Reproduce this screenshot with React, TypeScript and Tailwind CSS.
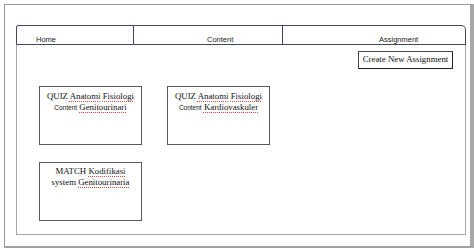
import React from "react";

const serif = { fontFamily: '"Liberation Serif", "Times New Roman", serif' };
const sans = { fontFamily: '"Liberation Sans", Arial, sans-serif' };

function Sp({ children }: { children: React.ReactNode }) {
  return (
    <span className="underline decoration-dotted decoration-[#e04848] decoration-[1px] underline-offset-[2px]">
      {children}
    </span>
  );
}

function Card({ children, pt = "pt-[3px]" }: { children: React.ReactNode; pt?: string }) {
  return (
    <div className={`w-[103px] h-[59px] border border-[#5a5a5a] bg-white text-center text-[8.8px] leading-[11px] text-[#111] ${pt}`} style={serif}>
      {children}
    </div>
  );
}

export default function App() {
  return (
    <div className="w-[474px] h-[251px] bg-white pl-[4px] pt-[4px] overflow-hidden">
      <div className="w-[470px] h-[244px] border-l border-t border-[#9a9a9a] border-r-[4px] border-r-[#a8a8a8] border-b-[2px] border-b-[#a0a0a0] pl-[11px] pt-[20px] pr-[4px]">
        {/* Tabs */}
        <div className="flex h-[20px] text-[7.5px] text-[#222]" style={sans}>
          <div className="w-[118px] border-t border-l border-r border-b border-[#3f4862] rounded-tl-[2px] pl-[19px] flex items-end leading-[9px]">
            Home
          </div>
          <div className="w-[149px] border-t border-r border-b border-[#3f4862] pl-[73px] flex items-end leading-[9px]">
            Content
          </div>
          <div className="flex-1 border-t border-r border-b border-[#3f4862] rounded-tr-[5px] pl-[96px] flex items-end leading-[9px]">
            Assignment
          </div>
        </div>
        {/* Panel */}
        <div className="h-[190px] border-l border-r border-b border-[#a5a5ad] flex flex-col">
          <div className="self-end mr-[12px] mt-[6px] w-[95px] h-[18px] border border-[#444] border-r-[#222] border-b-[#222] flex items-center justify-center text-[8.8px] text-[#111]" style={serif}>
            Create New Assignment
          </div>
          <div className="ml-[22px] mt-[17px] grid grid-cols-[103px_103px] gap-x-[25px] gap-y-[17px]">
            <Card pt="pt-[4px]">
              <div>QUIZ <Sp>Anatomi</Sp> <Sp>Fisiologi</Sp></div>
              <div>
                <span className="text-[6.5px]" style={sans}>Content</span> <Sp>Genitourinari</Sp>
              </div>
            </Card>
            <Card pt="pt-[4px]">
              <div>QUIZ <Sp>Anatomi</Sp> <Sp>Fisiologi</Sp></div>
              <div>
                <span className="text-[6.5px]" style={sans}>Content</span> <Sp>Kardiovaskuler</Sp>
              </div>
            </Card>
            <Card pt="pt-[3px]">
              <div>MATCH <Sp>Kodifikasi</Sp></div>
              <div>system <Sp>Genitourinaria</Sp></div>
            </Card>
          </div>
        </div>
      </div>
    </div>
  );
}
